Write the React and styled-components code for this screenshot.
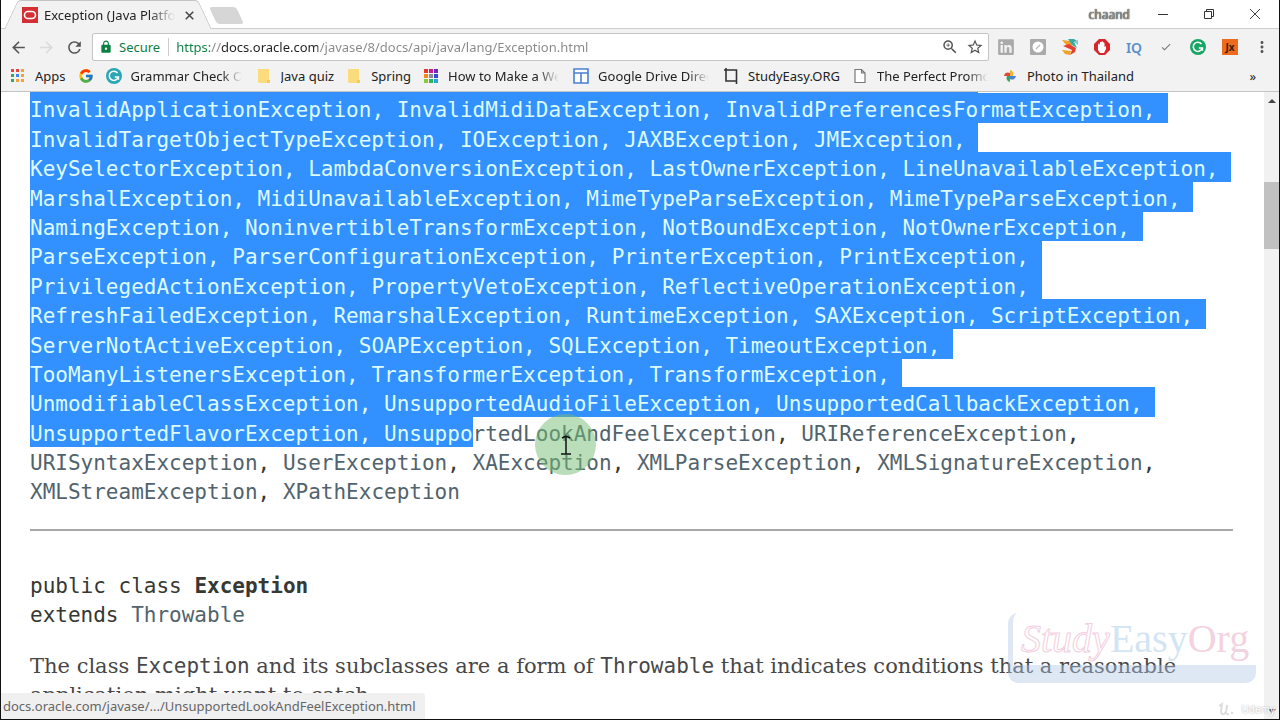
import React from "react";
import styled, { createGlobalStyle } from "styled-components";
import {
  MdArrowBack,
  MdArrowForward,
  MdCheck,
  MdLock,
  MdMoreVert,
  MdRefresh,
  MdStarBorder,
  MdZoomIn
} from "react-icons/md";
import { FaLinkedin } from "react-icons/fa";
import { FcGoogle } from "react-icons/fc";

const UI_FONT = `"Noto Sans", "Open Sans", sans-serif`;
const CODE_FONT = `"DejaVu Sans Mono", monospace`;

const EXCEPTION_ROWS = [
  ["IllegalClassFormatException", "InterruptedException", "IntrospectionException"],
  ["InvalidApplicationException", "InvalidMidiDataException", "InvalidPreferencesFormatException"],
  ["InvalidTargetObjectTypeException", "IOException", "JAXBException", "JMException"],
  ["KeySelectorException", "LambdaConversionException", "LastOwnerException", "LineUnavailableException"],
  ["MarshalException", "MidiUnavailableException", "MimeTypeParseException", "MimeTypeParseException"],
  ["NamingException", "NoninvertibleTransformException", "NotBoundException", "NotOwnerException"],
  ["ParseException", "ParserConfigurationException", "PrinterException", "PrintException"],
  ["PrivilegedActionException", "PropertyVetoException", "ReflectiveOperationException"],
  ["RefreshFailedException", "RemarshalException", "RuntimeException", "SAXException", "ScriptException"],
  ["ServerNotActiveException", "SOAPException", "SQLException", "TimeoutException"],
  ["TooManyListenersException", "TransformerException", "TransformException"],
  ["UnmodifiableClassException", "UnsupportedAudioFileException", "UnsupportedCallbackException"]
];

const GlobalStyle = createGlobalStyle`
  * {
    box-sizing: border-box;
  }
  body {
    margin: 0;
    background: #000;
  }
  a {
    color: inherit;
    text-decoration: none;
  }
  button {
    border: 0;
    padding: 0;
    background: none;
    font: inherit;
    color: inherit;
  }
`;

const Window = styled.div`
  position: relative;
  display: flex;
  flex-direction: column;
  height: 100vh;
  overflow: hidden;
  border: solid #111;
  border-width: 0 1px 1px;
  background: #fff;
  font-family: ${UI_FONT};
  color: #222;
`;

/* ---- title bar ---- */

const TitleBar = styled.header`
  display: flex;
  align-items: flex-start;
  height: 29px;
  padding: 0 1px 0 10px;
  border-bottom: 1px solid #cfcfcf;
`;

const Tab = styled.div`
  position: relative;
  z-index: 1;
  display: flex;
  align-items: center;
  width: 194px;
  height: 29px;
  padding: 0 11px;
  font-size: 13px;

  &::before,
  &::after {
    content: "";
    position: absolute;
    z-index: -1;
    top: 0;
    bottom: 0;
    width: 60%;
    border: 1px solid #c4c4c4;
    border-bottom: 0;
    background: #f2f2f2;
  }
  &::before {
    left: 0;
    border-right: 0;
    border-top-left-radius: 4px;
    transform: skewX(-25deg);
  }
  &::after {
    right: 0;
    border-left: 0;
    border-top-right-radius: 4px;
    transform: skewX(25deg);
  }
`;

const TabTitle = styled.span`
  flex: 1;
  margin: 0 10px 0 6px;
  overflow: hidden;
  white-space: nowrap;
  mask-image: linear-gradient(to right, #000 80%, transparent);
`;

const NewTab = styled.button`
  width: 27px;
  height: 17px;
  margin: 7px 0 0 8px;
  border-radius: 3px;
  background: #d6d6d6;
  transform: skewX(25deg);
`;

const WindowButtons = styled.div`
  display: flex;
  align-items: center;
  height: 28px;
  margin-left: auto;
`;

const UserName = styled.button`
  margin-right: 10px;
  font-size: 12px;
  color: #999;
  text-shadow: 0 0 1px #333, 0 0 1px #333;
`;

const WindowButton = styled.button`
  display: grid;
  place-items: center;
  width: 46px;
  height: 28px;
`;

/* ---- toolbar ---- */

const Toolbar = styled.nav`
  display: flex;
  align-items: center;
  height: 33px;
  padding: 3px 1px 0 3px;
  background: #f2f2f2;
`;

const NavButton = styled.button`
  display: grid;
  place-items: center;
  width: 28px;
  height: 28px;
  font-size: 19px;
  color: ${props => (props.$faint ? "#dadada" : "#555")};
`;

const Omnibox = styled.div`
  display: flex;
  flex: 1;
  align-items: center;
  height: 28px;
  margin: 0 1px 0 4px;
  padding: 0 1px 0 6px;
  border: 1px solid #c4c4c4;
  border-radius: 2px;
  background: #fff;
  font-size: 13px;
  color: #0b8043;
`;

const Secure = styled.label`
  display: flex;
  align-items: center;
  gap: 6px;
  padding-right: 8px;
  border-right: 1px solid #ccc;
`;

const Url = styled.input`
  flex: 1;
  min-width: 0;
  margin-left: 7px;
  padding: 0;
  border: 0;
  outline: 0;
  font: inherit;
  color: transparent;
  background: linear-gradient(
    to right,
    #0b8043 34px,
    #888 34px,
    #888 45px,
    #222 45px,
    #222 142px,
    #888 142px
  );
  background-clip: text;
`;

const OmniButton = styled.button`
  display: grid;
  place-items: center;
  width: 25px;
  height: 26px;
  font-size: 18px;
  color: #555;
`;

const Extension = styled.button`
  display: grid;
  place-items: center;
  width: 32px;
  height: 28px;
  font-size: 16px;
  color: ${props => props.$color || "#555"};
`;

const Tile = styled.span`
  display: grid;
  place-items: center;
  width: 16px;
  height: 16px;
  background: #ec6b1e;
  font-size: 10px;
  font-weight: 700;
  color: #3b1c08;
`;

const IqMark = styled.span`
  font-size: 14px;
  font-weight: 600;
`;

/* ---- bookmarks ---- */

const Bookmarks = styled.nav`
  display: flex;
  align-items: center;
  gap: 12px;
  height: 30px;
  padding: 0 23px 2px 9px;
  border-bottom: 1px solid #c4c4c4;
  background: #f2f2f2;
  font-size: 13px;
`;

const Bookmark = styled.a`
  display: flex;
  flex: none;
  align-items: center;
  gap: 9px;
`;

const BookmarkLabel = styled.span`
  max-width: 113px;
  overflow: hidden;
  white-space: nowrap;
  mask-image: ${props =>
    props.$fade ? "linear-gradient(to right, #000 80%, transparent 98%)" : "none"};
`;

const MoreBookmarks = styled.button`
  margin-left: auto;
`;

/* ---- page ---- */

const Viewport = styled.div`
  display: flex;
  flex: 1;
  min-height: 0;
`;

const Page = styled.main`
  position: relative;
  flex: 1;
  overflow: hidden;
  padding: 0 31px 0 29px;
  font-size: 21px;
  line-height: 1.4;
  color: #353833;
`;

const Subclasses = styled.div`
  margin-top: -25px;
  font-family: ${CODE_FONT};
`;

const Row = styled.div`
  white-space: pre;
`;

const Marked = styled.span`
  padding: 5px 0 1px;
  background: #3390ff;
  color: #dcfbff;
`;

const DocLink = styled.a`
  color: ${props => (props.$marked ? "inherit" : "#52636d")};
`;

const Divider = styled.hr`
  height: 2px;
  margin: 21px 0 41px;
  border: 0;
  background: #a8a8a8;
`;

const Signature = styled.pre`
  margin: 0;
  font-family: ${CODE_FONT};
`;

const Description = styled.p`
  margin: 21px 0 0;
  font-family: "DejaVu Serif", serif;
  color: #474747;

  code {
    font-family: ${CODE_FONT};
  }
`;

const Scrollbar = styled.div`
  display: flex;
  flex-direction: column;
  width: 15px;
  background: #f1f1f1;
`;

const ScrollArrow = styled.button`
  display: grid;
  place-items: center;
  height: 17px;
`;

const ScrollTrack = styled.div`
  flex: 1;
  padding-top: 73px;
`;

const ScrollThumb = styled.div`
  height: 67px;
  background: #c1c1c1;
`;

/* ---- things floating over the page ---- */

const Pointer = styled.div`
  position: absolute;
  left: 534px;
  top: 322px;
  display: grid;
  place-items: center;
  width: 61px;
  height: 61px;
  border-radius: 50%;
  background: rgba(115, 190, 115, 0.5);
`;

const StatusBubble = styled.div`
  position: absolute;
  left: 0;
  bottom: 0;
  width: 424px;
  height: 26px;
  padding-left: 2px;
  border-top-right-radius: 3px;
  background: #f0f0f0;
  font-size: 13px;
  line-height: 26px;
  color: #666;
`;

const Watermark = styled.div`
  position: absolute;
  right: 23px;
  bottom: 36px;
  width: 248px;
  height: 70px;
  padding-left: 8px;
  border: solid rgba(176, 200, 230, 0.42);
  border-width: 0 0 18px 5px;
  border-radius: 10px;
  font-family: "Liberation Serif", serif;
  font-size: 40px;
  line-height: 52px;
  white-space: nowrap;
  color: #d3e5f3;
`;

const WatermarkStudy = styled.i`
  color: #fff;
  -webkit-text-stroke: 1px #f3cfe0;
`;

const WatermarkOrg = styled.span`
  color: #f3d3e0;
`;

const Udemy = styled.div`
  position: absolute;
  right: 4px;
  bottom: 2px;
  display: flex;
  align-items: center;
  gap: 6px;
  font-size: 10px;
  color: #fff;
  text-shadow: 0 0 2px #999;
`;

const GRID_COLORS = {
  apps: ["#e8453c", "#e8453c", "#f3a13a", "#3aa757", "#4286f5", "#f3a13a", "#3aa757", "#f3a13a", "#f3a13a"],
  rainbow: ["#e8372d", "#c81e8c", "#6a2bbb", "#f08a1d", "#8a8a9a", "#3a49d0", "#8cc63f", "#2fb457", "#25a5dc"]
};

const DotGrid = ({ colors, size }) => (
  <svg width="16" height="16" viewBox="0 0 16 16">
    {colors.map((color, i) => (
      <rect
        key={i}
        x={1 + (i % 3) * 5}
        y={1 + Math.floor(i / 3) * 5}
        width={size}
        height={size}
        fill={color}
      />
    ))}
  </svg>
);

const OracleIcon = () => (
  <svg width="16" height="16" viewBox="0 0 16 16">
    <rect width="16" height="16" fill="#d32f35" />
    <rect x="2.5" y="4.5" width="11" height="7" rx="3.5" fill="none" stroke="#fff" strokeWidth="1.6" />
  </svg>
);

const GrammarIcon = ({ color }) => (
  <svg width="16" height="16" viewBox="0 0 16 16">
    <circle cx="8" cy="8" r="8" fill={color} />
    <path d="M11.5 5A4.6 4.6 0 1 0 12.3 9H8.8M12.4 8.8v3" fill="none" stroke="#fff" strokeWidth="1.6" />
  </svg>
);

const FolderIcon = () => (
  <svg width="16" height="16" viewBox="0 0 16 16">
    <path d="M2 1h11v11h1v3H3l-1-1z" fill="#fbdc7c" />
    <path d="M11 12h3v3h-3z" fill="#f4cb5c" />
  </svg>
);

const SheetIcon = () => (
  <svg width="16" height="16" viewBox="0 0 16 16" fill="#fff" stroke="#4a80d4" strokeWidth="1.6">
    <path d="M1 1h14v14H1zM1 5h14M8 5v10" />
  </svg>
);

const CropIcon = () => (
  <svg width="16" height="16" viewBox="0 0 16 16" fill="none" stroke="#333" strokeWidth="1.6">
    <path d="M3 0v13h10M1 2h12.5v14" />
  </svg>
);

const FileIcon = () => (
  <svg width="16" height="16" viewBox="0 0 16 16" fill="#fff" stroke="#777" strokeWidth="1.2">
    <path d="M3 1.5h6.5L13 5v9.5H3zM9.5 1.5V5H13" />
  </svg>
);

const PhotosIcon = () => (
  <svg width="16" height="16" viewBox="0 0 16 16">
    <path d="M8 8V2a4 4 0 0 1 3 6z" fill="#f0b63a" />
    <path d="M8 8h6a4 4 0 0 1-6 3z" fill="#4a7fe0" />
    <path d="M8 8v6a4 4 0 0 1-3-6z" fill="#3fa55a" />
    <path d="M8 8H2a4 4 0 0 1 6-3z" fill="#dd4b3e" />
  </svg>
);

const SlashBoxIcon = () => (
  <svg width="16" height="16" viewBox="0 0 16 16">
    <rect width="16" height="16" rx="1" fill="#aaa" />
    <circle cx="8" cy="8" r="5.5" fill="#fff" />
    <path d="M6 10l4-4" stroke="#bbb" strokeWidth="1.2" />
  </svg>
);

const SwirlIcon = () => (
  <svg width="18" height="18" viewBox="0 0 18 18">
    <path d="M1 2l8 1 3 4-6 1z" fill="#f0a126" />
    <path d="M7 1h6l3 2-3 1 3 6-5-3z" fill="#39a9a6" />
    <path d="M2 8l6-2 7 4-1 4-5 3 2-5z" fill="#e5402f" />
    <path d="M1 12l9 1-1 4-5-1z" fill="#f0a126" />
    <path d="M13 4l4-2v5z" fill="#7cc9d6" />
  </svg>
);

const StopHandIcon = () => (
  <svg width="16" height="16" viewBox="0 0 16 16">
    <path d="M5 0h6l5 5v6l-5 5H5l-5-5V5z" fill="#d9262c" />
    <path d="M4 6l1-2 1 2V3h1.500L8 2l1 1 1.500 1v4L12 7v3l-2 4H6l-2-3z" fill="#fff" />
  </svg>
);

const MinimizeIcon = () => (
  <svg width="12" height="12" stroke="#333">
    <path d="M1 6.5h10" />
  </svg>
);

const RestoreIcon = () => (
  <svg width="12" height="12" fill="none" stroke="#333">
    <path d="M1.5 3.5h7v7h-7zM3.5 3.5v-2h7v7h-2" />
  </svg>
);

const CloseIcon = ({ size = 12, width = 1 }) => (
  <svg width={size} height={size} viewBox="0 0 12 12" stroke="#444" strokeWidth={width}>
    <path d="M1 1l10 10M11 1L1 11" />
  </svg>
);

const ArrowIcon = ({ down }) => (
  <svg width="8" height="6" fill="#444">
    <path d={down ? "M0 1h8L4 5z" : "M0 5h8L4 1z"} />
  </svg>
);

const IBeamIcon = () => (
  <svg width="12" height="22" viewBox="0 0 12 22" fill="none" stroke="#111" strokeWidth="1.5">
    <path d="M2 4l4-2 4 2M6 3v17M1 20h10" />
  </svg>
);

const UdemyIcon = () => (
  <svg width="18" height="16" viewBox="0 0 18 16" fill="none" stroke="#ddd" strokeWidth="2">
    <path d="M2 5l3-2-1 7q0 4 3 3 3-2 3-9l-1 7q0 3 3 2M15 11v2" />
  </svg>
);

const BOOKMARKS = [
  { label: "Apps", icon: <DotGrid colors={GRID_COLORS.apps} size={3} /> },
  { label: "", icon: <FcGoogle size={16} /> },
  { label: "Grammar Check Onl", icon: <GrammarIcon color="#2ba6b5" />, fade: true },
  { label: "Java quiz", icon: <FolderIcon /> },
  { label: "Spring", icon: <FolderIcon /> },
  { label: "How to Make a Web", icon: <DotGrid colors={GRID_COLORS.rainbow} size={4} />, fade: true },
  { label: "Google Drive Direct", icon: <SheetIcon />, fade: true },
  { label: "StudyEasy.ORG", icon: <CropIcon /> },
  { label: "The Perfect Promo", icon: <FileIcon />, fade: true },
  { label: "Photo in Thailand", icon: <PhotosIcon /> }
];

const ExceptionLinks = ({ names, marked }) =>
  names.map((name, i) => (
    <React.Fragment key={i}>
      <DocLink href="#" $marked={marked}>
        {name}
      </DocLink>
      {", "}
    </React.Fragment>
  ));

const BrowserChrome = () => (
  <>
    <TitleBar>
      <Tab>
        <OracleIcon />
        <TabTitle>Exception (Java Platform</TabTitle>
        <button aria-label="Close tab">
          <CloseIcon size={9} width={2} />
        </button>
      </Tab>
      <NewTab aria-label="New tab" />
      <WindowButtons>
        <UserName>chaand</UserName>
        <WindowButton aria-label="Minimize">
          <MinimizeIcon />
        </WindowButton>
        <WindowButton aria-label="Restore">
          <RestoreIcon />
        </WindowButton>
        <WindowButton aria-label="Close">
          <CloseIcon />
        </WindowButton>
      </WindowButtons>
    </TitleBar>
    <Toolbar>
      <NavButton aria-label="Back">
        <MdArrowBack />
      </NavButton>
      <NavButton aria-label="Forward" $faint>
        <MdArrowForward />
      </NavButton>
      <NavButton aria-label="Reload">
        <MdRefresh />
      </NavButton>
      <Omnibox>
        <Secure htmlFor="url">
          <MdLock size={14} />
          Secure
        </Secure>
        <Url
          id="url"
          defaultValue="https://docs.oracle.com/javase/8/docs/api/java/lang/Exception.html"
        />
        <OmniButton aria-label="Zoom">
          <MdZoomIn />
        </OmniButton>
        <OmniButton aria-label="Bookmark this page">
          <MdStarBorder />
        </OmniButton>
      </Omnibox>
      <Extension aria-label="LinkedIn" $color="#aaa">
        <FaLinkedin size={18} />
      </Extension>
      <Extension aria-label="Blocker">
        <SlashBoxIcon />
      </Extension>
      <Extension aria-label="Swirl">
        <SwirlIcon />
      </Extension>
      <Extension aria-label="AdBlock">
        <StopHandIcon />
      </Extension>
      <Extension $color="#5b8fc7">
        <IqMark>IQ</IqMark>
      </Extension>
      <Extension aria-label="Check" $color="#777">
        <MdCheck size={12} />
      </Extension>
      <Extension aria-label="Grammar">
        <GrammarIcon color="#16a765" />
      </Extension>
      <Extension>
        <Tile>Jx</Tile>
      </Extension>
      <Extension aria-label="Menu">
        <MdMoreVert size={18} />
      </Extension>
    </Toolbar>
    <Bookmarks>
      {BOOKMARKS.map((item, i) => (
        <Bookmark key={i} href="#">
          {item.icon}
          {item.label && <BookmarkLabel $fade={item.fade}>{item.label}</BookmarkLabel>}
        </Bookmark>
      ))}
      <MoreBookmarks>»</MoreBookmarks>
    </Bookmarks>
  </>
);

const App = () => (
  <>
    <GlobalStyle />
    <Window>
      <BrowserChrome />
      <Viewport>
        <Page>
          <Subclasses>
            {EXCEPTION_ROWS.map((names, i) => (
              <Row key={i}>
                <Marked>
                  <ExceptionLinks names={names} marked />
                </Marked>
              </Row>
            ))}
            <Row>
              <Marked>
                <ExceptionLinks names={["UnsupportedFlavorException"]} marked />
                Unsuppo
              </Marked>
              <DocLink href="#">rtedLookAndFeelException</DocLink>
              {", "}
              <ExceptionLinks names={["URIReferenceException"]} />
            </Row>
            <Row>
              <ExceptionLinks
                names={[
                  "URISyntaxException",
                  "UserException",
                  "XAException",
                  "XMLParseException",
                  "XMLSignatureException"
                ]}
              />
            </Row>
            <Row>
              <ExceptionLinks names={["XMLStreamException"]} />
              <DocLink href="#">XPathException</DocLink>
            </Row>
          </Subclasses>
          <Divider />
          <Signature>
            public class <b>Exception</b>
            {"\n"}extends <DocLink href="#">Throwable</DocLink>
          </Signature>
          <Description>
            The class <code>Exception</code> and its subclasses are a form of{" "}
            <code>Throwable</code> that indicates conditions that a reasonable
            application might want to catch.
          </Description>
          <Pointer>
            <IBeamIcon />
          </Pointer>
        </Page>
        <Scrollbar>
          <ScrollArrow aria-label="Scroll up">
            <ArrowIcon />
          </ScrollArrow>
          <ScrollTrack>
            <ScrollThumb />
          </ScrollTrack>
          <ScrollArrow aria-label="Scroll down">
            <ArrowIcon down />
          </ScrollArrow>
        </Scrollbar>
      </Viewport>
      <Watermark>
        <WatermarkStudy>Study</WatermarkStudy>Easy<WatermarkOrg>Org</WatermarkOrg>
      </Watermark>
      <StatusBubble>docs.oracle.com/javase/.../UnsupportedLookAndFeelException.html</StatusBubble>
      <Udemy>
        <UdemyIcon />
        <span>Udemy</span>
      </Udemy>
    </Window>
  </>
);

export default App;
